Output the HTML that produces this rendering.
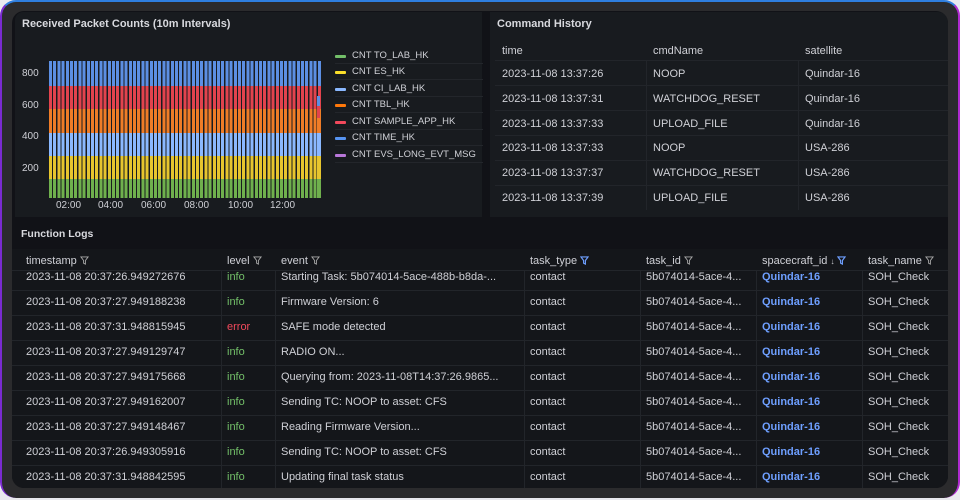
<!DOCTYPE html>
<html><head><meta charset="utf-8"><style>
*{margin:0;padding:0;box-sizing:border-box}
body{width:960px;height:500px;background:#e9e9ee;overflow:hidden;font-family:"Liberation Sans",sans-serif;position:relative}
.frame{position:absolute;left:0;top:0;width:960px;height:498px;border-radius:16px;background:#2b2b2d;border-top:2px solid #2f7fe0;border-left:2px solid #7a2bd0;border-right:2px solid #b02ad0}
.inner{position:absolute;left:12px;top:11px;width:936px;height:477px;border-radius:12px;background:#111217;overflow:hidden}
.panel{position:absolute;background:#181b1f}
.title{position:absolute;color:#d8d9de;font-size:11px;font-weight:bold}
.t{position:absolute;color:#cfd0d6;font-size:11px;white-space:nowrap}
.hl{position:absolute;height:1px;background:#22252a}
.vl{position:absolute;width:1px;background:#22252a}
.bars{position:absolute;left:34px;top:49px;width:273px;height:137px;
background:linear-gradient(to top,#6fb04d 0 19px,#e6c52e 19px 42px,#8ab8ff 42px 65px,#ef7c27 65px 89px,#e2434d 89px 112px,#5c8fe3 112px 137px)}
.bars::after{content:"";position:absolute;inset:0;background:repeating-linear-gradient(90deg,transparent 0 3px,#181b1f 3px 4.2px)}
.grid{position:absolute;left:34px;width:273px;height:1px;background:#23262b}
.lg{position:absolute;left:320px;width:148px;height:16px;border-bottom:1px solid #23262b}
.lg i{position:absolute;left:0;top:7px;width:11px;height:3px;border-radius:1px}
.lg span{position:absolute;left:17px;top:2px;color:#cfd0d6;font-size:9.5px;white-space:nowrap}
.filt{display:inline-block;width:9px;height:9px;margin-left:3px;vertical-align:-1px}
.info{color:#73bf69}.err{color:#f2495c}.q{color:#6e9fff;font-weight:bold}
</style></head><body>
<div class="frame"></div>
<div class="inner">
 <div class="panel" style="left:3px;top:1px;width:467px;height:205px;border-radius:8px 0 0 0">
  <div class="title" style="left:7px;top:6px">Received Packet Counts (10m Intervals)</div>
  <div class="grid" style="top:62px"></div><div class="grid" style="top:94px"></div><div class="grid" style="top:125px"></div><div class="grid" style="top:157px"></div>
  <div class="bars"></div>
  <div style="position:absolute;left:302px;top:84px;width:3px;height:102px;background:linear-gradient(to top,#6fb04d 0 19px,#e6c52e 19px 42px,#8ab8ff 42px 65px,#ef7c27 65px 80px,#e2434d 80px 92px,#5c8fe3 92px 102px)"></div>
  <div class="t" style="left:7px;top:56px;font-size:10px">800</div>
  <div class="t" style="left:7px;top:88px;font-size:10px">600</div>
  <div class="t" style="left:7px;top:119px;font-size:10px">400</div>
  <div class="t" style="left:7px;top:151px;font-size:10px">200</div>
  <div class="t" style="left:41px;top:188px;font-size:10px">02:00</div>
  <div class="t" style="left:83px;top:188px;font-size:10px">04:00</div>
  <div class="t" style="left:126px;top:188px;font-size:10px">06:00</div>
  <div class="t" style="left:169px;top:188px;font-size:10px">08:00</div>
  <div class="t" style="left:213px;top:188px;font-size:10px">10:00</div>
  <div class="t" style="left:255px;top:188px;font-size:10px">12:00</div>
  <div class="lg" style="top:36px"><i style="background:#73bf69"></i><span>CNT TO_LAB_HK</span></div>
  <div class="lg" style="top:52px"><i style="background:#fade2a"></i><span>CNT ES_HK</span></div>
  <div class="lg" style="top:69px"><i style="background:#8ab8ff"></i><span>CNT CI_LAB_HK</span></div>
  <div class="lg" style="top:85px"><i style="background:#ff780a"></i><span>CNT TBL_HK</span></div>
  <div class="lg" style="top:102px"><i style="background:#f2495c"></i><span>CNT SAMPLE_APP_HK</span></div>
  <div class="lg" style="top:118px"><i style="background:#5794f2"></i><span>CNT TIME_HK</span></div>
  <div class="lg" style="top:135px"><i style="background:#b877d9"></i><span>CNT EVS_LONG_EVT_MSG</span></div>
 </div>
 <div class="panel" style="left:478px;top:1px;width:458px;height:205px;border-radius:0 10px 0 0">
  <div class="title" style="left:7px;top:6px">Command History</div>
  <div class="t" style="left:12px;top:33px">time</div><div class="t" style="left:163px;top:33px">cmdName</div><div class="t" style="left:315px;top:33px">satellite</div>
  <div class="hl" style="left:5px;top:48px;width:453px"></div>
  <div class="vl" style="left:156px;top:48px;height:150px"></div><div class="vl" style="left:308px;top:48px;height:150px"></div>
  <div class="t" style="left:12px;top:56px">2023-11-08 13:37:26</div><div class="t" style="left:163px;top:56px">NOOP</div><div class="t" style="left:315px;top:56px">Quindar-16</div>
  <div class="hl" style="left:5px;top:73px;width:453px"></div>
  <div class="t" style="left:12px;top:81px">2023-11-08 13:37:31</div><div class="t" style="left:163px;top:81px">WATCHDOG_RESET</div><div class="t" style="left:315px;top:81px">Quindar-16</div>
  <div class="hl" style="left:5px;top:98px;width:453px"></div>
  <div class="t" style="left:12px;top:106px">2023-11-08 13:37:33</div><div class="t" style="left:163px;top:106px">UPLOAD_FILE</div><div class="t" style="left:315px;top:106px">Quindar-16</div>
  <div class="hl" style="left:5px;top:123px;width:453px"></div>
  <div class="t" style="left:12px;top:130px">2023-11-08 13:37:33</div><div class="t" style="left:163px;top:130px">NOOP</div><div class="t" style="left:315px;top:130px">USA-286</div>
  <div class="hl" style="left:5px;top:148px;width:453px"></div>
  <div class="t" style="left:12px;top:155px">2023-11-08 13:37:37</div><div class="t" style="left:163px;top:155px">WATCHDOG_RESET</div><div class="t" style="left:315px;top:155px">USA-286</div>
  <div class="hl" style="left:5px;top:173px;width:453px"></div>
  <div class="t" style="left:12px;top:180px">2023-11-08 13:37:39</div><div class="t" style="left:163px;top:180px">UPLOAD_FILE</div><div class="t" style="left:315px;top:180px">USA-286</div>
 </div>
 <div class="title" style="left:9px;top:217px;font-size:10.5px">Function Logs</div>
 <div class="panel" style="left:0;top:238px;width:936px;height:239px;background:#14161a">
  <div class="t" style="left:14px;top:6px">timestamp<svg class="filt" viewBox="0 0 10 10"><path d="M1 1h8L6 5v4L4 8V5z" fill="none" stroke="#aaa" stroke-width="1"/></svg></div>
  <div class="t" style="left:215px;top:6px">level<svg class="filt" viewBox="0 0 10 10"><path d="M1 1h8L6 5v4L4 8V5z" fill="none" stroke="#aaa" stroke-width="1"/></svg></div>
  <div class="t" style="left:269px;top:6px">event<svg class="filt" viewBox="0 0 10 10"><path d="M1 1h8L6 5v4L4 8V5z" fill="none" stroke="#aaa" stroke-width="1"/></svg></div>
  <div class="t" style="left:518px;top:6px">task_type<svg class="filt" viewBox="0 0 10 10"><path d="M1 1h8L6 5v4L4 8V5z" fill="none" stroke="#6e9fff" stroke-width="1.3"/></svg></div>
  <div class="t" style="left:634px;top:6px">task_id<svg class="filt" viewBox="0 0 10 10"><path d="M1 1h8L6 5v4L4 8V5z" fill="none" stroke="#aaa" stroke-width="1"/></svg></div>
  <div class="t" style="left:750px;top:6px">spacecraft_id <span style="font-size:8px">↓</span><svg class="filt" viewBox="0 0 10 10"><path d="M1 1h8L6 5v4L4 8V5z" fill="none" stroke="#6e9fff" stroke-width="1.3"/></svg></div>
  <div class="t" style="left:856px;top:6px">task_name<svg class="filt" viewBox="0 0 10 10"><path d="M1 1h8L6 5v4L4 8V5z" fill="none" stroke="#aaa" stroke-width="1"/></svg></div>
  <div class="hl" style="left:0;top:21px;width:936px"></div>
  <div class="vl" style="left:209px;top:22px;height:217px"></div>
  <div class="vl" style="left:263px;top:22px;height:217px"></div>
  <div class="vl" style="left:512px;top:22px;height:217px"></div>
  <div class="vl" style="left:628px;top:22px;height:217px"></div>
  <div class="vl" style="left:744px;top:22px;height:217px"></div>
  <div class="vl" style="left:850px;top:22px;height:217px"></div>
 </div>
</div>
<div style="position:absolute;left:12px;top:260px;width:936px">
 <div class="t" style="left:14px;top:11px">2023-11-08 20:37:26.949272676</div><div class="t info" style="left:215px;top:11px">info</div><div class="t" style="left:269px;top:11px">Starting Task: 5b074014-5ace-488b-b8da-...</div><div class="t" style="left:518px;top:11px">contact</div><div class="t" style="left:634px;top:11px">5b074014-5ace-4...</div><div class="t q" style="left:750px;top:11px">Quindar-16</div><div class="t" style="left:856px;top:11px">SOH_Check</div>
 <div class="hl" style="left:0;top:30px;width:936px"></div>
 <div class="t" style="left:14px;top:36px">2023-11-08 20:37:27.949188238</div><div class="t info" style="left:215px;top:36px">info</div><div class="t" style="left:269px;top:36px">Firmware Version: 6</div><div class="t" style="left:518px;top:36px">contact</div><div class="t" style="left:634px;top:36px">5b074014-5ace-4...</div><div class="t q" style="left:750px;top:36px">Quindar-16</div><div class="t" style="left:856px;top:36px">SOH_Check</div>
 <div class="hl" style="left:0;top:55px;width:936px"></div>
 <div class="t" style="left:14px;top:61px">2023-11-08 20:37:31.948815945</div><div class="t err" style="left:215px;top:61px">error</div><div class="t" style="left:269px;top:61px">SAFE mode detected</div><div class="t" style="left:518px;top:61px">contact</div><div class="t" style="left:634px;top:61px">5b074014-5ace-4...</div><div class="t q" style="left:750px;top:61px">Quindar-16</div><div class="t" style="left:856px;top:61px">SOH_Check</div>
 <div class="hl" style="left:0;top:80px;width:936px"></div>
 <div class="t" style="left:14px;top:86px">2023-11-08 20:37:27.949129747</div><div class="t info" style="left:215px;top:86px">info</div><div class="t" style="left:269px;top:86px">RADIO ON...</div><div class="t" style="left:518px;top:86px">contact</div><div class="t" style="left:634px;top:86px">5b074014-5ace-4...</div><div class="t q" style="left:750px;top:86px">Quindar-16</div><div class="t" style="left:856px;top:86px">SOH_Check</div>
 <div class="hl" style="left:0;top:105px;width:936px"></div>
 <div class="t" style="left:14px;top:111px">2023-11-08 20:37:27.949175668</div><div class="t info" style="left:215px;top:111px">info</div><div class="t" style="left:269px;top:111px">Querying from: 2023-11-08T14:37:26.9865...</div><div class="t" style="left:518px;top:111px">contact</div><div class="t" style="left:634px;top:111px">5b074014-5ace-4...</div><div class="t q" style="left:750px;top:111px">Quindar-16</div><div class="t" style="left:856px;top:111px">SOH_Check</div>
 <div class="hl" style="left:0;top:130px;width:936px"></div>
 <div class="t" style="left:14px;top:136px">2023-11-08 20:37:27.949162007</div><div class="t info" style="left:215px;top:136px">info</div><div class="t" style="left:269px;top:136px">Sending TC: NOOP to asset: CFS</div><div class="t" style="left:518px;top:136px">contact</div><div class="t" style="left:634px;top:136px">5b074014-5ace-4...</div><div class="t q" style="left:750px;top:136px">Quindar-16</div><div class="t" style="left:856px;top:136px">SOH_Check</div>
 <div class="hl" style="left:0;top:155px;width:936px"></div>
 <div class="t" style="left:14px;top:161px">2023-11-08 20:37:27.949148467</div><div class="t info" style="left:215px;top:161px">info</div><div class="t" style="left:269px;top:161px">Reading Firmware Version...</div><div class="t" style="left:518px;top:161px">contact</div><div class="t" style="left:634px;top:161px">5b074014-5ace-4...</div><div class="t q" style="left:750px;top:161px">Quindar-16</div><div class="t" style="left:856px;top:161px">SOH_Check</div>
 <div class="hl" style="left:0;top:180px;width:936px"></div>
 <div class="t" style="left:14px;top:186px">2023-11-08 20:37:26.949305916</div><div class="t info" style="left:215px;top:186px">info</div><div class="t" style="left:269px;top:186px">Sending TC: NOOP to asset: CFS</div><div class="t" style="left:518px;top:186px">contact</div><div class="t" style="left:634px;top:186px">5b074014-5ace-4...</div><div class="t q" style="left:750px;top:186px">Quindar-16</div><div class="t" style="left:856px;top:186px">SOH_Check</div>
 <div class="hl" style="left:0;top:205px;width:936px"></div>
 <div class="t" style="left:14px;top:211px">2023-11-08 20:37:31.948842595</div><div class="t info" style="left:215px;top:211px">info</div><div class="t" style="left:269px;top:211px">Updating final task status</div><div class="t" style="left:518px;top:211px">contact</div><div class="t" style="left:634px;top:211px">5b074014-5ace-4...</div><div class="t q" style="left:750px;top:211px">Quindar-16</div><div class="t" style="left:856px;top:211px">SOH_Check</div>
</div>
</body></html>
